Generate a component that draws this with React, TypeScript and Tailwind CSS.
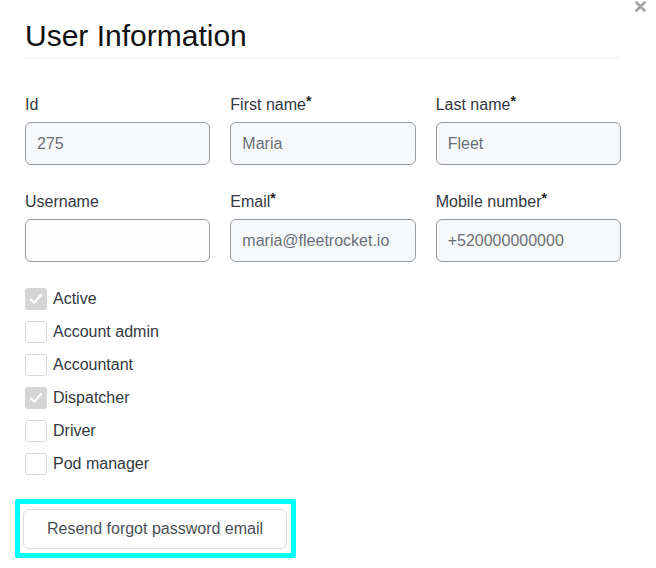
import React from 'react';

interface FieldProps {
  label: string;
  value: string;
  required?: boolean;
  disabled?: boolean;
}

const Field: React.FC<FieldProps> = ({ label, value, required, disabled = true }) => (
  <div className="flex flex-col">
    <label className="h-[20px] text-[16px] leading-[20px] text-[#333840]">
      {label}
      {required && <span className="relative -top-[4px] text-[14px] font-bold leading-none text-[#222]">*</span>}
    </label>
    <input
      readOnly
      value={value}
      className={`mt-[7px] h-[43px] w-full rounded-[6px] border border-[#959aa3] px-[11px] text-[16px] text-[#6b7078] outline-none ${
        disabled ? 'bg-[#f7f8fa]' : 'bg-[#fdfdfd]'
      }`}
    />
  </div>
);

const roles = [
  { name: 'Active', checked: true },
  { name: 'Account admin', checked: false },
  { name: 'Accountant', checked: false },
  { name: 'Dispatcher', checked: true },
  { name: 'Driver', checked: false },
  { name: 'Pod manager', checked: false },
];

const Checkbox: React.FC<{ checked: boolean }> = ({ checked }) =>
  checked ? (
    <span className="flex h-[22px] w-[22px] items-center justify-center rounded-[3px] bg-[#d5d5d5]">
      <svg width="14" height="14" viewBox="0 0 14 14" fill="none">
        <path d="M2 7.5l3.2 3.2L12 3" stroke="#ffffff" strokeWidth="2.2" strokeLinecap="round" strokeLinejoin="round" />
      </svg>
    </span>
  ) : (
    <span className="h-[22px] w-[22px] rounded-[3px] border border-[#d9d9d9] bg-white" />
  );

export default function App() {
  return (
    <div className="relative h-[568px] w-[656px] overflow-hidden bg-white px-[25px] font-['Liberation_Sans',Arial,sans-serif]">
      {/* Close */}
      <button className="absolute right-[10px] top-[1px] text-[#a3a3a3]" aria-label="Close">
        <svg width="11" height="11" viewBox="0 0 11 11" fill="none">
          <path d="M1.5 1.5l8 8M9.5 1.5l-8 8" stroke="currentColor" strokeWidth="2.6" strokeLinecap="round" />
        </svg>
      </button>

      {/* Header */}
      <div className="mr-[11px] border-b border-[#f0f0f0] pb-[4px] pt-[18px]">
        <h2 className="text-[30px] leading-[36px] text-[#111111]">User Information</h2>
      </div>

      {/* Fields */}
      <div className="mt-[36px] grid grid-cols-3 gap-x-[20px] gap-y-[27px] pr-[10px]">
        <Field label="Id" value="275" />
        <Field label="First name" value="Maria" required />
        <Field label="Last name" value="Fleet" required />
        <Field label="Username" value="" disabled={false} />
        <Field label="Email" value="maria@fleetrocket.io" required />
        <Field label="Mobile number" value="+520000000000" required />
      </div>

      {/* Roles */}
      <div className="mt-[26px] flex flex-col gap-[11px]">
        {roles.map((r) => (
          <label key={r.name} className="flex items-center gap-[6px] text-[16px] leading-[22px] text-[#333840]">
            <Checkbox checked={r.checked} />
            <span>{r.name}</span>
          </label>
        ))}
      </div>

      {/* Action */}
      <div className="-ml-[10px] mt-[24px] inline-block rounded-[2px] border-[5px] border-[#00ffff] pb-[4px] pl-[3px] pr-[4px] pt-[5px]">
        <button className="h-[40px] w-[264px] rounded-[6px] border border-[#d8dbe0] bg-white text-[16px] text-[#4b5058]">
          Resend forgot password email
        </button>
      </div>
    </div>
  );
}
